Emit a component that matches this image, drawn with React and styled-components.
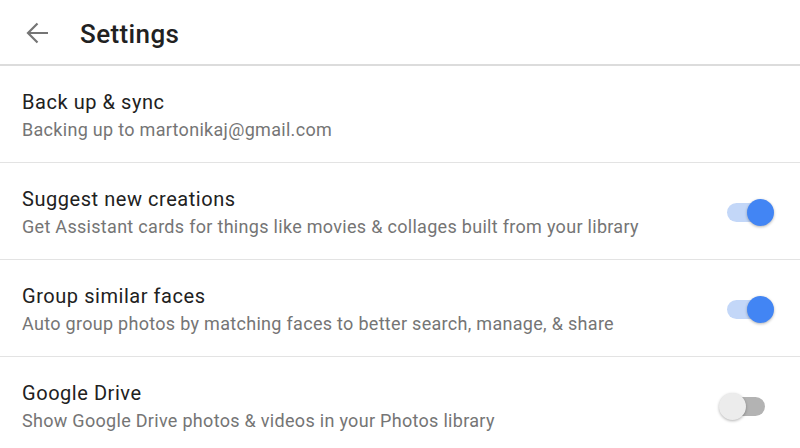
import React from 'react'
import styled, { createGlobalStyle } from 'styled-components'

const GlobalStyle = createGlobalStyle`
  body {
    margin: 0;
    background: #ffffff;
    font-family: Roboto, "Noto Sans", sans-serif;
  }
`

const Page = styled.div`
  width: 800px;
  height: 448px;
  overflow: hidden;
  background: #fff;
`

const Header = styled.header`
  height: 64px;
  display: flex;
  align-items: center;
  border-bottom: 2px solid #dcdcdc;
`

const BackButton = styled.button`
  width: 80px;
  height: 64px;
  border: none;
  background: none;
  padding: 2px 0 0 26px;
  display: flex;
  align-items: center;
  cursor: pointer;
`

const Title = styled.h1`
  margin: 0;
  padding-top: 3px;
  font-size: 26px;
  font-weight: 500;
  letter-spacing: 0.4px;
  color: #212121;
`

const Row = styled.div`
  height: 97px;
  display: flex;
  align-items: center;
  padding: 2px 22px 0;
  border-bottom: 1px solid #e3e3e3;
  box-sizing: border-box;
  &:last-child {
    border-bottom: none;
  }
`

const Texts = styled.div`
  flex: 1;
  display: flex;
  flex-direction: column;
  gap: 5px;
`

const RowTitle = styled.div`
  font-size: 20px;
  letter-spacing: 0.55px;
  color: #212121;
  line-height: 24px;
`

const RowSub = styled.div`
  font-size: 18px;
  letter-spacing: 0.3px;
  color: #757575;
  line-height: 22px;
`

const Track = styled.div`
  position: relative;
  width: 38px;
  height: 19px;
  border-radius: 10px;
  margin-right: 13px;
  background: ${p => (p.$on ? '#c3d7f8' : '#b3b3b3')};
`

const Thumb = styled.div`
  position: absolute;
  top: -4px;
  left: ${p => (p.$on ? '20px' : '-8px')};
  width: 27px;
  height: 27px;
  border-radius: 50%;
  background: ${p => (p.$on ? '#4285f4' : '#ececec')};
  box-shadow: 0 1px 3px rgba(0, 0, 0, 0.3);
`

const Toggle = ({ on }) => (
  <Track $on={on}>
    <Thumb $on={on} />
  </Track>
)

const items = [
  { title: 'Back up & sync', sub: 'Backing up to martonikaj@gmail.com' },
  { title: 'Suggest new creations', sub: 'Get Assistant cards for things like movies & collages built from your library', toggle: true, on: true },
  { title: 'Group similar faces', sub: 'Auto group photos by matching faces to better search, manage, & share', toggle: true, on: true },
  { title: 'Google Drive', sub: 'Show Google Drive photos & videos in your Photos library', toggle: true, on: false },
]

export default function App() {
  return (
    <Page>
      <GlobalStyle />
      <Header>
        <BackButton aria-label="Back">
          <svg width="23" height="22" viewBox="0 0 23 22">
            <path d="M22 11H2M11.5 1.5L2 11l9.5 9.5" fill="none" stroke="#757575" strokeWidth="2.2" />
          </svg>
        </BackButton>
        <Title>Settings</Title>
      </Header>
      {items.map(it => (
        <Row key={it.title}>
          <Texts>
            <RowTitle>{it.title}</RowTitle>
            <RowSub>{it.sub}</RowSub>
          </Texts>
          {it.toggle && <Toggle on={it.on} />}
        </Row>
      ))}
    </Page>
  )
}
